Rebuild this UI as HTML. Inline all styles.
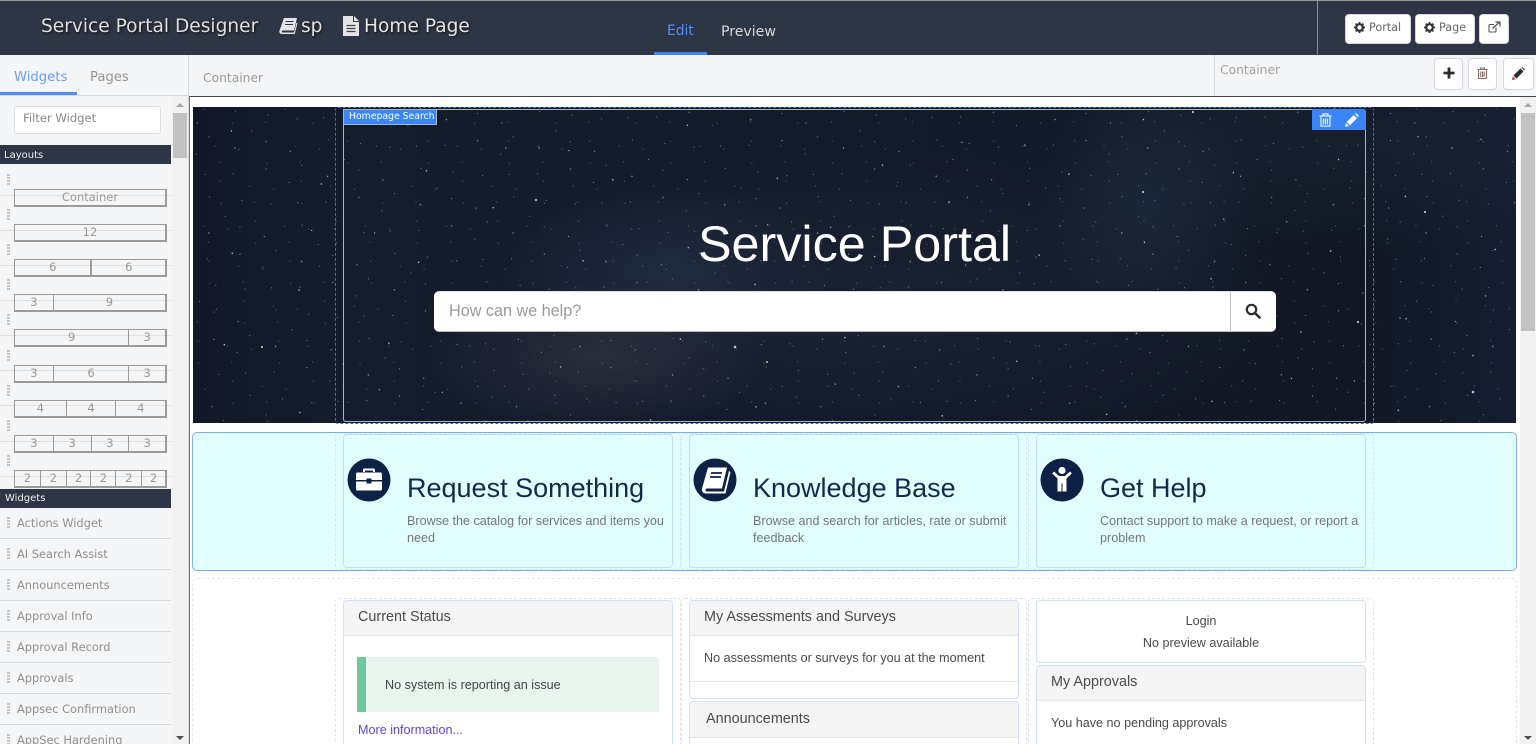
<!DOCTYPE html>
<html><head><meta charset="utf-8"><title>Service Portal Designer</title>
<style>
*{box-sizing:border-box}
html,body{margin:0;padding:0;width:1536px;height:744px;overflow:hidden;background:#fff;font-family:"Liberation Sans",sans-serif}
#root{position:relative;width:1536px;height:744px;overflow:hidden;background:#fff}
.a{position:absolute}
.t{position:absolute;white-space:nowrap;line-height:1}
.d{font-family:"DejaVu Sans",sans-serif}
.btn{position:absolute;background:#fff;border:1px solid #d5d8dd;border-radius:4px}
.bar{position:absolute;left:0;width:171px;background:#2e3545;color:#f0f0f0;font:10px "DejaVu Sans",sans-serif;padding-left:4px}
.lay{position:absolute;left:14px;width:153px;height:18px;border:1px solid #9a9a9a;border-bottom-width:2px;border-right-width:2px;display:flex;color:#999;font:11.5px/14px "DejaVu Sans",sans-serif;text-align:center}
.lay span{display:block;border-left:1px solid #9a9a9a}
.lay span:first-child{border-left:0}
.ln{position:absolute;left:0;width:171px;height:1px;background:#dedfe1}
.grip{position:absolute;left:7px;width:3px;height:11px;background:repeating-linear-gradient(#c5c5c5 0 2px,transparent 2px 3px)}
.w{position:absolute;left:0;width:171px;height:31px;border-bottom:1px solid #d8d9dc;color:#8f8f8f;font:11.4px/1 "DejaVu Sans",sans-serif}
.w b{font-weight:normal;position:absolute;left:17px;top:10px;white-space:nowrap}
.w i{position:absolute;left:7px;top:9px;width:3px;height:11px;background:repeating-linear-gradient(#c5c5c5 0 2px,transparent 2px 3px)}
.card{position:absolute;background:#e1ffff;border:1px solid #c5dcf8;border-radius:4px}
.col{position:absolute;border:1px dashed #d5e6ec;border-radius:4px}
.pan{position:absolute;background:#fff;border:1px solid #cfe0f8;border-radius:4px;overflow:hidden}
.head{background:#f4f4f4;border-bottom:1px solid #e2e4e8;position:absolute;left:0;right:0;top:0}
</style></head><body><div id="root">

<!-- header -->
<div class="a" style="left:0;top:0;width:1536px;height:55px;background:#2e3545;border-top:1px solid #999"></div>
<div class="t d" style="left:41px;top:18px;font-size:18.6px;color:#dedede;text-shadow:1px 1px 2px #111">Service Portal Designer</div>
<svg class="a" style="left:279px;top:17px" width="19" height="18" viewBox="0 0 19 18"><path d="M5 1h13l-3 12.500H3.500c-1 0-1 2 0 2H15l2.500-10 1 .5-2.800 11H3c-2 0-3-1.500-2.500-3.500z" fill="#e4e4e4"/><path d="M6.500 4.500h8M6 7.500h8" stroke="#2e3545" stroke-width="1"/></svg>
<div class="t d" style="left:301px;top:18px;font-size:18.600px;color:#e4e4e4;text-shadow:1px 1px 2px #111">sp</div>
<svg class="a" style="left:343px;top:16px" width="17" height="20" viewBox="0 0 17 20"><path d="M0 0h10v6h6v14H0z" fill="#e4e4e4"/><path d="M11 0l5 5h-5z" fill="#e4e4e4"/><path d="M3.500 9.500h9M3.500 12.500h9M3.500 15.500h9" stroke="#444" stroke-width="1.300"/></svg>
<div class="t d" style="left:364px;top:18px;font-size:18.6px;color:#e4e4e4;text-shadow:1px 1px 2px #111">Home Page</div>
<div class="t d" style="left:667px;top:25px;font-size:13.800px;color:#4f8ef7">Edit</div>
<div class="a" style="left:654px;top:52px;width:53px;height:3px;background:#3f84f2"></div>
<div class="t d" style="left:721px;top:25px;font-size:14.100px;color:#d8d8d8">Preview</div>
<div class="a" style="left:1317px;top:1px;width:1px;height:54px;background:#8b8f96"></div>

<div class="btn" style="left:1345px;top:14px;width:66px;height:30px"></div>
<svg class="a" style="left:1354px;top:22px" width="11" height="11" viewBox="0 0 12 12"><circle cx="6" cy="6" r="3.600" fill="none" stroke="#333" stroke-width="2.400"/><path d="M6 0v2.500M6 9.500V12M0 6h2.500M9.500 6H12M1.800 1.800l1.800 1.800M8.400 8.400l1.800 1.800M1.800 10.200l1.800-1.800M8.400 3.600l1.800-1.800" stroke="#333" stroke-width="2"/></svg>
<div class="t d" style="left:1369px;top:22px;font-size:11.200px;color:#666">Portal</div>
<div class="btn" style="left:1415px;top:14px;width:60px;height:30px"></div>
<svg class="a" style="left:1424px;top:22px" width="11" height="11" viewBox="0 0 12 12"><circle cx="6" cy="6" r="3.600" fill="none" stroke="#333" stroke-width="2.400"/><path d="M6 0v2.500M6 9.500V12M0 6h2.500M9.500 6H12M1.800 1.800l1.800 1.800M8.400 8.400l1.800 1.800M1.800 10.200l1.800-1.800M8.400 3.600l1.800-1.800" stroke="#333" stroke-width="2"/></svg>
<div class="t d" style="left:1439px;top:22px;font-size:11.200px;color:#666">Page</div>
<div class="btn" style="left:1479px;top:14px;width:30px;height:30px"></div>
<svg class="a" style="left:1488px;top:21px" width="13" height="12" viewBox="0 0 13 12"><path d="M8 6.500V10a1 1 0 0 1-1 1H2a1 1 0 0 1-1-1V4.500a1 1 0 0 1 1-1h4" fill="none" stroke="#555" stroke-width="1.100"/><path d="M4.500 7.500L11 1.500M7.500 1H12v4.500" fill="none" stroke="#555" stroke-width="1.300"/></svg>

<!-- second row -->
<div class="a" style="left:0;top:55px;width:1536px;height:41px;background:#f4f5f7"></div>
<div class="a" style="left:0;top:95px;width:188px;height:1px;background:#d8d9dc"></div>
<div class="t d" style="left:14px;top:71px;font-size:13.200px;color:#6d9cf4">Widgets</div>
<div class="a" style="left:0;top:92px;width:77px;height:3px;background:#4f8ef7"></div>
<div class="t d" style="left:90px;top:71px;font-size:13.200px;color:#949494">Pages</div>
<div class="a" style="left:188px;top:55px;width:1px;height:689px;background:#d5d6d9"></div>
<div class="t d" style="left:203px;top:72px;font-size:12.300px;color:#999">Container</div>
<div class="a" style="left:1214px;top:55px;width:1px;height:41px;background:#d5d6d9"></div>
<div class="t d" style="left:1220px;top:64px;font-size:12.300px;color:#a0a0a0">Container</div>
<div class="btn" style="left:1434px;top:58px;width:29px;height:32px"></div>
<svg class="a" style="left:1443px;top:67px" width="12" height="12" viewBox="0 0 12 12"><path d="M6 .5v11M.5 6h11" stroke="#2a2a2a" stroke-width="2.800"/></svg>
<div class="btn" style="left:1468px;top:58px;width:29px;height:32px"></div>
<svg class="a" style="left:1477px;top:67px" width="11" height="12" viewBox="0 0 11 12"><path d="M0.500 2.500h10M3.500 2.500V1h4v1.500" fill="none" stroke="#8a6a62" stroke-width="1.100"/><path d="M1.500 3v8.500h8V3M3.800 4.500v5.500M5.500 4.500v5.500M7.200 4.500v5.500" fill="none" stroke="#8a6a62" stroke-width="1.100"/></svg>
<div class="btn" style="left:1503px;top:58px;width:31px;height:32px"></div>
<svg class="a" style="left:1512px;top:67px" width="13" height="13" viewBox="0 0 13 13"><path d="M0 13l.8-3.800 3 3z" fill="#a04a40"/><path d="M1.500 8.500L8.500 1.500l3 3-7 7z" fill="#2a2a2a"/><path d="M9.500.8L10.300 0 13 2.700l-.8.800z" fill="#2a2a2a"/></svg>

<!-- sidebar -->
<div class="a" style="left:0;top:96px;width:188px;height:648px;background:#f4f5f7"></div>
<div class="a" style="left:172px;top:96px;width:16px;height:648px;background:#f1f1f1"></div>
<div class="a" style="left:173px;top:113px;width:14px;height:45px;background:#c1c1c1"></div>
<div class="a" style="left:176px;top:103px;width:0;height:0;border:4px solid transparent;border-top:0;border-bottom:4px solid #a8a8a8"></div>
<div class="a" style="left:176px;top:736px;width:0;height:0;border:4px solid transparent;border-bottom:0;border-top:4px solid #505050"></div>
<div class="a" style="left:14px;top:106px;width:147px;height:28px;background:#fff;border:1px solid #dcdde0;border-radius:3px"></div>
<div class="t d" style="left:23px;top:113px;font-size:11.600px;color:#888">Filter Widget</div>
<div class="bar" style="top:145px;height:19px;line-height:21px">Layouts</div>

<div class="a" style="left:0;top:164px;width:171px;height:325px;overflow:hidden">
<div class="ln" style="top:31px"></div><div class="ln" style="top:66px"></div><div class="ln" style="top:101px"></div><div class="ln" style="top:136px"></div><div class="ln" style="top:171px"></div><div class="ln" style="top:206px"></div><div class="ln" style="top:241px"></div><div class="ln" style="top:277px"></div><div class="ln" style="top:312px"></div>
<div class="grip" style="top:10px"></div><div class="grip" style="top:45px"></div><div class="grip" style="top:80px"></div><div class="grip" style="top:115px"></div><div class="grip" style="top:150px"></div><div class="grip" style="top:186px"></div><div class="grip" style="top:221px"></div><div class="grip" style="top:256px"></div><div class="grip" style="top:291px"></div>
<div class="lay" style="top:25px"><span style="width:151px">Container</span></div>
<div class="lay" style="top:60px"><span style="width:151px">12</span></div>
<div class="lay" style="top:95px"><span style="width:76px">6</span><span style="width:75px;border-left-width:2px">6</span></div>
<div class="lay" style="top:130px"><span style="width:38px">3</span><span style="width:113px">9</span></div>
<div class="lay" style="top:165px"><span style="width:114px">9</span><span style="width:37px">3</span></div>
<div class="lay" style="top:201px"><span style="width:38px">3</span><span style="width:76px">6</span><span style="width:37px">3</span></div>
<div class="lay" style="top:236px"><span style="width:51px">4</span><span style="width:50px">4</span><span style="width:50px">4</span></div>
<div class="lay" style="top:271px"><span style="width:38px">3</span><span style="width:38px">3</span><span style="width:38px">3</span><span style="width:37px">3</span></div>
<div class="lay" style="top:306px"><span style="width:25px">2</span><span style="width:26px">2</span><span style="width:25px">2</span><span style="width:25px">2</span><span style="width:26px">2</span><span style="width:24px">2</span></div>
</div>

<div class="bar" style="top:489px;height:19px;line-height:20px;padding-left:5px">Widgets</div>
<div class="w" style="top:508px"><i></i><b>Actions Widget</b></div>
<div class="w" style="top:539px"><i></i><b>AI Search Assist</b></div>
<div class="w" style="top:570px"><i></i><b>Announcements</b></div>
<div class="w" style="top:601px"><i></i><b>Approval Info</b></div>
<div class="w" style="top:632px"><i></i><b>Approval Record</b></div>
<div class="w" style="top:663px"><i></i><b>Approvals</b></div>
<div class="w" style="top:694px"><i></i><b>Appsec Confirmation</b></div>
<div class="w" style="top:725px"><i></i><b>AppSec Hardening</b></div>

<!-- frame -->
<div class="a" style="left:189px;top:96px;width:1347px;height:648px;background:#fff;border-top:1px solid #444;border-left:1px solid #777"></div>
<div class="a" style="left:1520px;top:97px;width:16px;height:647px;background:#f1f1f1"></div>
<div class="a" style="left:1521px;top:113px;width:14px;height:218px;background:#c1c1c1"></div>
<div class="a" style="left:1524px;top:103px;width:0;height:0;border:4px solid transparent;border-top:0;border-bottom:4px solid #a8a8a8"></div>
<div class="a" style="left:1524px;top:736px;width:0;height:0;border:4px solid transparent;border-bottom:0;border-top:4px solid #505050"></div>

<!-- hero -->
<div class="a" style="left:193px;top:107px;width:1323px;height:316px;background:
radial-gradient(ellipse 170px 75px at 405px 250px,rgba(85,82,90,.34),transparent),
radial-gradient(ellipse 170px 85px at 480px 165px,rgba(50,66,90,.36),transparent),
radial-gradient(ellipse 110px 130px at 955px 95px,rgba(42,62,84,.36),transparent),
radial-gradient(ellipse 420px 150px at 700px 190px,rgba(34,44,64,.4),transparent),
radial-gradient(ellipse 300px 120px at 1150px 30px,rgba(32,44,62,.4),transparent),
linear-gradient(90deg,#121827 0,#141c2d 12%,#131a2a 50%,#111724 88%,#141e30 100%)"></div>
<svg class="a" style="left:193px;top:107px" width="1323" height="316" viewBox="0 0 1323 316">
<defs><pattern id="s1" width="97" height="89" patternUnits="userSpaceOnUse" patternTransform="rotate(17)"><g fill="#8d9ab6"><circle cx="9" cy="14" r=".6"/><circle cx="31" cy="61" r=".5"/><circle cx="52" cy="27" r=".7"/><circle cx="74" cy="75" r=".5"/><circle cx="88" cy="38" r=".6"/><circle cx="17" cy="44" r=".5"/><circle cx="63" cy="6" r=".5"/><circle cx="42" cy="81" r=".5"/><circle cx="24" cy="24" r=".5"/><circle cx="80" cy="12" r=".5"/><circle cx="58" cy="52" r=".5"/><circle cx="6" cy="70" r=".5"/></g></pattern>
<pattern id="s3" width="61" height="53" patternUnits="userSpaceOnUse" patternTransform="rotate(-41)"><g fill="#6f7d9a"><circle cx="7" cy="9" r=".5"/><circle cx="33" cy="21" r=".5"/><circle cx="52" cy="44" r=".5"/><circle cx="19" cy="38" r=".5"/><circle cx="45" cy="6" r=".5"/></g></pattern>
<pattern id="s2" width="211" height="173" patternUnits="userSpaceOnUse" patternTransform="rotate(-23)"><g fill="#c8d0e4"><circle cx="26" cy="37" r=".7"/><circle cx="88" cy="121" r=".7"/><circle cx="147" cy="58" r=".8"/><circle cx="190" cy="150" r=".7"/><circle cx="61" cy="160" r=".6"/><circle cx="118" cy="14" r=".6"/></g></pattern></defs>
<rect width="1323" height="316" fill="url(#s3)"/><rect width="1323" height="316" fill="url(#s1)"/><rect width="1323" height="316" fill="url(#s2)"/>
<g fill="#aebfec"><circle cx="542" cy="240" r="1.300"/><circle cx="574" cy="255" r="1"/><circle cx="543" cy="145" r="1.100"/><circle cx="950" cy="85" r="1.100"/><circle cx="1165" cy="215" r="1.100"/><circle cx="69" cy="240" r="1.100"/><circle cx="1232" cy="105" r="1.100"/><circle cx="1280" cy="285" r="1.300"/><circle cx="343" cy="93" r="1.100"/><circle cx="1000" cy="5" r="1.100"/></g>
</svg>
<div class="a" style="left:335px;top:107px;width:1039px;height:317px;border:1px dashed #2f6fd0;border-radius:3px"></div>
<div class="a" style="left:343px;top:109px;width:1023px;height:313px;border:1px solid #aeb6c4;border-radius:3px"></div>
<div class="a d" style="left:343px;top:109px;width:94px;height:16px;background:#3b86f7;border:1px solid #a8b4c8;color:#fff;font-size:9.300px;line-height:13px;padding-left:5px;white-space:nowrap;font-family:'DejaVu Sans',sans-serif">Homepage Search</div>
<div class="a" style="left:1312px;top:109px;width:54px;height:21px;background:#3b86f7;border-radius:0 3px 0 0"></div>
<svg class="a" style="left:1319px;top:113px" width="13" height="14" viewBox="0 0 13 14"><path d="M.5 3h12M4 3V1h5v2" fill="none" stroke="#e8f0ff" stroke-width="1.200"/><path d="M2 3.500V13.200h9V3.500M4.500 5.500v6M6.500 5.500v6M8.500 5.500v6" fill="none" stroke="#e8f0ff" stroke-width="1.200"/></svg>
<svg class="a" style="left:1345px;top:113px" width="14" height="14" viewBox="0 0 14 14"><path d="M0 14l1-4 3 3z" fill="#fff"/><path d="M1.700 9l7-7 3.300 3.300-7 7z" fill="#fff"/><path d="M10 1l1-1 3 3-1 1z" fill="#fff"/></svg>
<div class="t" style="left:698px;top:216px;font-size:50.300px;color:#fff;line-height:56px">Service Portal</div>
<div class="a" style="left:434px;top:291px;width:842px;height:41px;background:#fff;border-radius:5px;border-top:1px solid #ddd;border-bottom:1px solid #bbb"></div>
<div class="a" style="left:1230px;top:291px;width:1px;height:41px;background:#c4c4c4"></div>
<div class="t" style="left:449px;top:303px;font-size:16.200px;color:#999">How can we help?</div>
<svg class="a" style="left:1245px;top:303px" width="16" height="16" viewBox="0 0 16 16"><circle cx="6.500" cy="6.500" r="4.700" fill="none" stroke="#2b2b2b" stroke-width="2.200"/><path d="M10 10l4.500 4.500" stroke="#2b2b2b" stroke-width="2.600" stroke-linecap="round"/></svg>

<!-- row 2 -->
<div class="a" style="left:192px;top:432px;width:1325px;height:139px;background:#e1ffff;border:1px solid #7fa9f5;border-radius:5px"></div>
<div class="col" style="left:335px;top:433px;width:346px;height:137px"></div>
<div class="col" style="left:681px;top:433px;width:346px;height:137px"></div>
<div class="col" style="left:1028px;top:433px;width:346px;height:137px"></div>
<div class="card" style="left:343px;top:434px;width:330px;height:134px"></div>
<div class="card" style="left:689px;top:434px;width:330px;height:134px"></div>
<div class="card" style="left:1036px;top:434px;width:330px;height:134px"></div>

<svg class="a" style="left:347px;top:458px" width="44" height="44" viewBox="0 0 44 44"><circle cx="22" cy="22" r="21.500" fill="#0c2143"/><path d="M16 14v-2.500a1 1 0 0 1 1-1h10a1 1 0 0 1 1 1V14h-2v-1.500h-8V14z" fill="#fff"/><path d="M9 16a1.500 1.500 0 0 1 1.500-1.500h23A1.500 1.500 0 0 1 35 16v6H24.500v-1.500h-5V22H9z" fill="#fff"/><path d="M9 23.500h10.500V25.500h5v-2H35V31a1.500 1.500 0 0 1-1.500 1.500h-23A1.500 1.500 0 0 1 9 31z" fill="#fff"/></svg>
<svg class="a" style="left:693px;top:458px" width="44" height="44" viewBox="0 0 44 44"><circle cx="22" cy="22" r="21.500" fill="#0c2143"/><path d="M15 9.500h19l-5 21H14c-2 0-2 3 0 3h17l5-20.500 1.500 1L32.500 35.500H13c-3 0-4.500-2-4-5z" fill="#fff"/><path d="M18 15h11M17 19h11" stroke="#0c2143" stroke-width="1.800"/></svg>
<svg class="a" style="left:1040px;top:458px" width="44" height="44" viewBox="0 0 44 44"><circle cx="22" cy="22" r="21.500" fill="#0c2143"/><circle cx="22" cy="12.500" r="3.600" fill="#fff"/><path d="M14 13.500l5 4.500h6l5-4.500 1.800 2-5.300 5v13h-4v-8h-1v8h-4v-13l-5.300-5z" fill="#fff"/></svg>

<div class="t" style="left:407px;top:472px;font-size:27px;line-height:32px;color:#13284b">Request Something</div>
<div class="t" style="left:407px;top:515px;font-size:12.600px;color:#757575">Browse the catalog for services and items you</div>
<div class="t" style="left:407px;top:532px;font-size:12.600px;color:#757575">need</div>
<div class="t" style="left:753px;top:472px;font-size:27px;line-height:32px;color:#13284b">Knowledge Base</div>
<div class="t" style="left:753px;top:515px;font-size:12.600px;color:#757575">Browse and search for articles, rate or submit</div>
<div class="t" style="left:753px;top:532px;font-size:12.600px;color:#757575">feedback</div>
<div class="t" style="left:1100px;top:472px;font-size:27px;line-height:32px;color:#13284b">Get Help</div>
<div class="t" style="left:1100px;top:515px;font-size:12.600px;color:#757575">Contact support to make a request, or report a</div>
<div class="t" style="left:1100px;top:532px;font-size:12.600px;color:#757575">problem</div>

<!-- row 3 -->
<div class="a" style="left:192px;top:578px;width:1325px;height:180px;border:1px dashed #e3e6ea;border-radius:5px"></div>
<div class="col" style="left:335px;top:598px;width:346px;height:160px;border-color:#dfe2e6"></div>
<div class="col" style="left:681px;top:598px;width:346px;height:160px;border-color:#dfe2e6"></div>
<div class="col" style="left:1028px;top:598px;width:346px;height:160px;border-color:#dfe2e6"></div>

<div class="pan" style="left:343px;top:600px;width:330px;height:160px"><div class="head" style="height:35px"></div></div>
<div class="t" style="left:358px;top:610px;font-size:14.400px;color:#4a4a4a">Current Status</div>
<div class="a" style="left:357px;top:657px;width:302px;height:55px;background:#e8f4ed;border-left:9px solid #70c898"></div>
<div class="t" style="left:385px;top:679px;font-size:12.600px;color:#444">No system is reporting an issue</div>
<div class="t" style="left:358px;top:724px;font-size:12.600px;color:#5a48cc">More information...</div>

<div class="pan" style="left:689px;top:600px;width:330px;height:99px"><div class="head" style="height:35px"></div><div class="a" style="left:0;right:0;top:80px;height:1px;background:#dfe4ea"></div></div>
<div class="t" style="left:704px;top:610px;font-size:14.400px;color:#4a4a4a">My Assessments and Surveys</div>
<div class="t" style="left:704px;top:652px;font-size:12.600px;color:#4a4a4a">No assessments or surveys for you at the moment</div>
<div class="pan" style="left:689px;top:701px;width:330px;height:60px"><div class="head" style="height:36px"></div></div>
<div class="t" style="left:706px;top:712px;font-size:14.400px;color:#4a4a4a">Announcements</div>

<div class="pan" style="left:1036px;top:600px;width:330px;height:63px"></div>
<div class="t" style="left:1036px;width:330px;text-align:center;top:615px;font-size:12.600px;color:#4a4a4a">Login</div>
<div class="t" style="left:1036px;width:330px;text-align:center;top:637px;font-size:12.600px;color:#4a4a4a">No preview available</div>
<div class="pan" style="left:1036px;top:665px;width:330px;height:95px"><div class="head" style="height:35px"></div></div>
<div class="t" style="left:1051px;top:675px;font-size:14.400px;color:#4a4a4a">My Approvals</div>
<div class="t" style="left:1051px;top:717px;font-size:12.600px;color:#4a4a4a">You have no pending approvals</div>
</div></body></html>
